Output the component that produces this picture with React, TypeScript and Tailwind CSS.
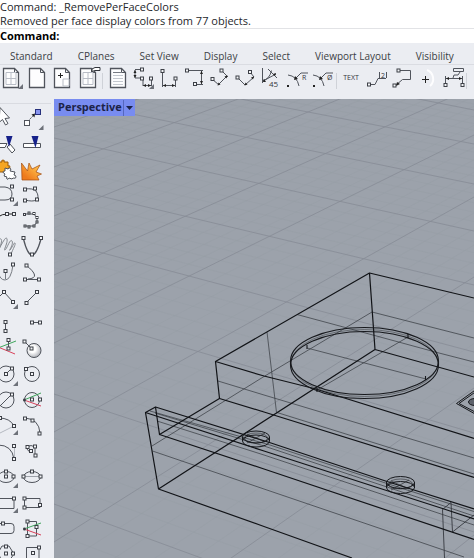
import React from "react";

type Point = [number, number];

const INK = "#50545c";

const tabs = [
  "Standard",
  "CPlanes",
  "Set View",
  "Display",
  "Select",
  "Viewport Layout",
  "Visibility",
];

// small square handles used by nearly every icon
const Nodes = ({ at, size = 3 }: { at: Point[]; size?: number }) => (
  <g fill="#f4f5f8" stroke="#3d4047" strokeWidth="1">
    {at.map(([x, y]) => (
      <rect
        key={`${x}-${y}`}
        x={x - size / 2}
        y={y - size / 2}
        width={size}
        height={size}
      />
    ))}
  </g>
);

// flyout marker in the lower right corner of a tool
const Corner = ({ x, y }: { x: number; y: number }) => (
  <path d={`M${x} ${y}v-5l-5 5z`} fill="#6d7179" stroke="none" />
);

const Page = ({ x, children }: { x: number; children?: React.ReactNode }) => (
  <>
    <path
      d={`M${x} 68.5h11l4 4v15h-15z`}
      fill="#fdfdfe"
      stroke={INK}
      strokeWidth="1.3"
    />
    <path d={`M${x + 11} 68.5v4h4`} fill="none" stroke={INK} />
    {children}
  </>
);

// All drawings below share one sheet, each button shows its own cell of it.
const topTools: { name: string; icon: React.ReactNode }[] = [
  {
    name: "New layout",
    icon: (
      <>
        <Page x={3.5}>
          <path d="M6 72.500h10v12h-10zM11 72.500v12M6 78.500h10" stroke="#b9bdc6" fill="none" />
        </Page>
        <Corner x={23} y={89} />
      </>
    ),
  },
  { name: "Blank page", icon: <Page x={29.5} /> },
  {
    name: "Add detail",
    icon: (
      <Page x={54.5}>
        <path d="M58 75.500h5M60.500 73v5" stroke="#222" fill="none" />
        <path d="M63 79h6v7h-6z" stroke="#b9bdc6" fill="#fff" />
      </Page>
    ),
  },
  {
    name: "Edit layout",
    icon: (
      <Page x={80.5}>
        <path d="M83 72.500h10v12h-10zM88 72.500v12M83 78.500h10" stroke="#b9bdc6" fill="none" />
        <path d="M92 69l3-1.500h5v3h-5l-3 1z" fill="#fff" stroke="#33363c" />
      </Page>
    ),
  },
  {
    name: "Page notes",
    icon: (
      <Page x={110.5}>
        <path d="M113 72.500h8" stroke="#777b84" />
        <path d="M113 75.500h10M113 78.500h10M113 81.500h10M113 84.500h10" stroke="#c3c7ce" />
      </Page>
    ),
  },
  {
    name: "Dimension",
    icon: (
      <>
        <path d="M135 69.500h8M135 78h8v8M151.500 78v8M143 85.500h8M135 70v8" />
        <path d="M133.500 73l1.500-3 1.500 3zM133.500 75l1.500 3 1.500-3zM146 84l-3 1.500 3 1.500zM148 84l3 1.500-3 1.500z" fill="#222" stroke="none" />
        <Nodes at={[[142, 69.5], [142, 78.5], [151, 78.5]]} />
        <Corner x={154} y={89} />
      </>
    ),
  },
  {
    name: "Horizontal dimension",
    icon: (
      <>
        <path d="M162.500 71v16M175.500 79v8M163 85.500h12" />
        <path d="M166 84l-3 1.500 3 1.500zM172 84l3 1.500-3 1.500z" fill="#222" stroke="none" />
        <Nodes at={[[162.5, 71], [175.5, 78.5]]} />
      </>
    ),
  },
  {
    name: "Vertical dimension",
    icon: (
      <>
        <path d="M187 70.500h16M195 84.500h8M201.500 71v13" />
        <path d="M200 74l1.500-3 1.500 3zM200 81l1.500 3 1.500-3z" fill="#222" stroke="none" />
        <Nodes at={[[187, 70.5], [195, 84]]} />
      </>
    ),
  },
  {
    name: "Aligned dimension",
    icon: (
      <>
        <path d="M212 79l7 6M221 70l7 7M218 85l9-9" />
        <path d="M217.500 85.500l1-3 2 2zM227.500 75.500l-1 3-2-2z" fill="#222" stroke="none" />
        <Nodes at={[[212.5, 79], [221.5, 70.5]]} />
      </>
    ),
  },
  {
    name: "Rotated dimension",
    icon: (
      <>
        <path d="M237 77l8 8M250 72l4 5M245 85l9-8" />
        <path d="M244.500 85.500l1-3 2 2zM254 76.500l-1 3-2-2z" fill="#222" stroke="none" />
        <Nodes at={[[237.5, 77.5], [250, 72]]} />
      </>
    ),
  },
  {
    name: "Angle dimension",
    icon: (
      <>
        <path d="M262.500 68v15M263 81l13-7M268 69l9 9M262.500 80.500q7-1 9-10" />
        <path d="M263 82l1-3 2 3zM276 73l-1 3-2-2z" fill="#222" stroke="none" />
        <text x="269" y="87" fontSize="8" fill="#33363c" stroke="none">45</text>
      </>
    ),
  },
  {
    name: "Radius dimension",
    icon: (
      <>
        <path d="M288 75q9 1 11 11M295 79l6-6h7" />
        <path d="M294 80l1-4 3 3zM287 85h2v2h-2z" fill="#222" stroke="none" />
        <text x="302" y="80" fontSize="7" fill="#33363c" stroke="none">R</text>
      </>
    ),
  },
  {
    name: "Diameter dimension",
    icon: (
      <>
        <path d="M313 75q9 1 11 11M320 79l6-6h7" />
        <path d="M319 80l1-4 3 3zM313 85h2v2h-2z" fill="#222" stroke="none" />
        <text x="327" y="80" fontSize="7" fill="#33363c" stroke="none">Ø</text>
      </>
    ),
  },
  {
    name: "Text",
    icon: (
      <text x="351" y="80" fontSize="7" textAnchor="middle" fill="#33363c" stroke="none">
        TEXT
      </text>
    ),
  },
  {
    name: "Leader",
    icon: (
      <>
        <path d="M369 84.500h6l3-6h8M379.500 72v6M386.500 72v6" />
        <text x="381" y="78" fontSize="7" fill="#33363c" stroke="none">2</text>
        <Nodes at={[[369, 84.5]]} />
      </>
    ),
  },
  {
    name: "Curve leader",
    icon: (
      <>
        <path d="M398 70.500h12.500v9h-8l-7 6" />
        <path d="M396 86l1-4 3 2z" fill="#222" stroke="none" />
        <Nodes at={[[398.5, 70.5], [394.5, 85.5]]} />
      </>
    ),
  },
  {
    name: "Center mark",
    icon: (
      <>
        <path d="M427 70a9.500 9.500 0 0 1 3 16" stroke="#fdfdfe" strokeWidth="2" />
        <path d="M422 79.500h7M425.500 76v7" stroke="#222" />
      </>
    ),
  },
  {
    name: "Dimension style",
    icon: (
      <>
        <path d="M453.500 68.500h10v3h-10zM460 72l-2 3h-4l-1 3M445.500 76v9M462.500 76v9M446 78.500h16" />
        <path d="M449 77l-3 1.500 3 1.500zM459 77l3 1.500-3 1.500z" fill="#222" stroke="none" />
        <Nodes at={[[445.5, 85], [462.5, 85]]} />
      </>
    ),
  },
];

const groupEnds = ["Edit layout", "Diameter dimension", "Dimension style"];

const sideTools: { name: string; icon: React.ReactNode }[] = [
  {
    name: "Select",
    icon: <path d="M0 107.500l9.500 10.500-4.500.5 3 5-2.500 1.500-3-5.500-3.500 3z" fill="#fff" />,
  },
  {
    name: "Move",
    icon: (
      <>
        <path d="M28 121l6-6" strokeDasharray="2 1" />
        <path d="M35 113.500l-.5 4-3-3z" fill="#222" stroke="none" />
        <rect x="35.500" y="109.500" width="5" height="5" fill="#8793ee" stroke="#26307c" />
        <rect x="24.500" y="120.500" width="5" height="5" fill="#fff" />
        <Corner x={43.5} y={130} />
      </>
    ),
  },
  {
    name: "Trim",
    icon: (
      <>
        <path d="M-4 143.500h11l-2 4h-9z" fill="#fff" />
        <path d="M7 147l3-3 5 6-3 3z" fill="#fff" />
        <path d="M6 136h6.500l-3.500 11z" fill="#16218a" stroke="none" />
      </>
    ),
  },
  {
    name: "Split",
    icon: (
      <>
        <path d="M23.500 143.500h17v4h-17z" fill="#fff" />
        <path d="M31.500 136h7l-3 12z" fill="#16218a" stroke="none" />
      </>
    ),
  },
  {
    name: "Join",
    icon: (
      <>
        <path d="M-3 162h5q-1-2 1-2t1 2h4v4q2-1 2 1t-2 1v4h-11z" fill="#f5a623" stroke="#9a5b0a" />
        <path d="M5 168l3 1q1-2 3 0l-1 2 5 1-1 3q2 0 2 2t-3 1l-1 1-3-1q-1 2-2 1t0-2l-3-1 1-2q-2-1-2-2t2-1z" fill="#fff" />
      </>
    ),
  },
  {
    name: "Explode",
    icon: (
      <>
        <defs>
          <linearGradient id="flame" x1="1" y1="0" x2="0" y2="1">
            <stop offset="0.2" stopColor="#ffc04a" />
            <stop offset="0.8" stopColor="#ee7a1c" />
          </linearGradient>
        </defs>
        <path d="M21.500 163l6 8 1.500-8 3 6 8-4-4 7 5.500 2-4.500 2 2 4h-17z" fill="url(#flame)" stroke="#a04a10" strokeWidth="0.7" />
      </>
    ),
  },
  {
    name: "Interpolated curve",
    icon: (
      <>
        <path d="M-4 187h9q7 1 7 7t-7 6h-9" />
        <Nodes at={[[12, 186.5], [12, 199.5]]} />
        <Corner x={18} y={206} />
      </>
    ),
  },
  {
    name: "Control point curve",
    icon: (
      <>
        <path d="M25 189q8-1 11 2 4 6 0 9-3 2-11 0" />
        <Nodes at={[[25, 189.5], [25, 200.5], [35, 188.5], [37, 199.5]]} />
      </>
    ),
  },
  {
    name: "Blend curve",
    icon: (
      <>
        <path d="M-2 217q4-3 9-3h7" stroke="#222" />
        <Nodes at={[[7, 214], [14, 214]]} />
      </>
    ),
  },
  {
    name: "Edit points",
    icon: (
      <>
        <path d="M24 214h10l3 4v4l-3 4-9 0" />
        <Nodes at={[[24.5, 214.5], [29, 213], [34, 213.5], [37, 217.5], [37, 222], [34, 226], [29, 227], [25, 226]]} size={2} />
      </>
    ),
  },
  {
    name: "Spiral",
    icon: (
      <>
        <path d="M-3 245c2-8 6-8 4-1s-3 6-1 3 6-12 7-8-4 12-2 11 5-12 7-9-4 11-2 9 4-8 5-7-2 6-4 11" stroke="#85898f" />
        <Nodes at={[[10, 254.5]]} />
      </>
    ),
  },
  {
    name: "Parabola",
    icon: (
      <>
        <path d="M23.500 239q4 16 8.500 16t9-16" strokeWidth="1.3" />
        <Nodes at={[[23.5, 238], [41, 238], [32, 254.5]]} />
      </>
    ),
  },
  {
    name: "Hyperbola",
    icon: (
      <>
        <path d="M-2 272q2 8 7 8 6 0 8-15M5.500 271v8" stroke="#777b82" />
        <Nodes at={[[5.5, 271], [13, 264.5]]} />
      </>
    ),
  },
  {
    name: "Conic",
    icon: (
      <>
        <path d="M26 265q16 13 2 14M25 279.500h14" />
        <Nodes at={[[26.5, 265.5], [25, 279.5], [39, 279.5]]} />
      </>
    ),
  },
  {
    name: "Polyline",
    icon: (
      <>
        <path d="M-3 299l7-7 9 10" />
        <Nodes at={[[4, 292], [13, 302]]} />
        <Corner x={18} y={309} />
      </>
    ),
  },
  {
    name: "Line",
    icon: (
      <>
        <path d="M26 303l11-11" />
        <Nodes at={[[37, 292], [26.5, 303]]} />
      </>
    ),
  },
  {
    name: "Vertical segment",
    icon: (
      <>
        <path d="M5.500 322v9" />
        <Nodes at={[[5.5, 322], [5.5, 331]]} />
      </>
    ),
  },
  {
    name: "Horizontal segment",
    icon: (
      <>
        <path d="M32 322.500h8" />
        <Nodes at={[[32, 322.5], [40, 322.5]]} />
      </>
    ),
  },
  {
    name: "Line normal",
    icon: (
      <>
        <path d="M-2 348l18-7" stroke="#3fa55c" />
        <path d="M-2 347l17 7" stroke="#d8415a" />
        <path d="M8.500 340v8" />
        <Nodes at={[[8.5, 340], [8.5, 348.5]]} />
      </>
    ),
  },
  {
    name: "Line from surface",
    icon: (
      <>
        <defs>
          <radialGradient id="ball" cx="0.4" cy="0.4" r="0.6">
            <stop offset="0.4" stopColor="#fff" />
            <stop offset="1" stopColor="#b4b6bc" />
          </radialGradient>
        </defs>
        <circle cx="34" cy="350.500" r="7" fill="url(#ball)" />
        <path d="M24.500 341.500l7 7" />
        <Nodes at={[[24.5, 341.5], [31.5, 348.5]]} />
      </>
    ),
  },
  {
    name: "Circle",
    icon: (
      <>
        <circle cx="6" cy="374" r="8" />
        <path d="M6 374l6-6" />
        <Nodes at={[[6, 374], [12, 368.5]]} />
        <Corner x={18} y={386} />
      </>
    ),
  },
  {
    name: "Circle from center",
    icon: (
      <>
        <circle cx="32" cy="374" r="7.500" />
        <Nodes at={[[32, 374], [26, 369]]} />
      </>
    ),
  },
  {
    name: "Circle by diameter",
    icon: (
      <>
        <circle cx="6" cy="400" r="8" />
        <path d="M12 394l-12 12" />
        <Nodes at={[[12, 394.5]]} />
      </>
    ),
  },
  {
    name: "Circle vertical",
    icon: (
      <>
        <circle cx="32" cy="400" r="7.500" />
        <path d="M24 400l17-7" stroke="#3fa55c" />
        <path d="M24 400l17 6" stroke="#d8415a" />
        <Nodes at={[[32, 399.5], [40, 399.5]]} />
        <path d="M23.500 399h2v2h-2z" fill="#222" />
      </>
    ),
  },
  {
    name: "Arc",
    icon: (
      <>
        <path d="M-1 418q11 0 15 8" />
        <path d="M0 433l14-7" stroke="#b4b8c0" />
        <Nodes at={[[0, 418], [14, 426]]} />
        <Corner x={18} y={435} />
      </>
    ),
  },
  {
    name: "Arc by points",
    icon: (
      <>
        <path d="M25 418q14 1 15 15" />
        <Nodes at={[[25, 418.5], [32.5, 420.5], [39.5, 433.5]]} />
      </>
    ),
  },
  {
    name: "Arc by direction",
    icon: (
      <>
        <path d="M-2 445q14 0 16 14" />
        <path d="M14.500 446v13" stroke="#b4b8c0" />
        <Nodes at={[[14, 446], [14, 459]]} />
      </>
    ),
  },
  {
    name: "Polyarc",
    icon: (
      <>
        <path d="M27 447q4-3 8 0v8M27 447q0 5 4 4" />
        <Nodes at={[[27.5, 447], [35, 446.5], [31, 451], [35.5, 455.5]]} />
      </>
    ),
  },
  {
    name: "Ellipse",
    icon: (
      <>
        <ellipse cx="6" cy="477" rx="8" ry="5.500" />
        <Nodes at={[[6, 471.5], [13.5, 476.5], [6, 476.5]]} />
        <Corner x={18} y={488} />
      </>
    ),
  },
  {
    name: "Ellipse by diameter",
    icon: (
      <>
        <ellipse cx="32" cy="477" rx="8.500" ry="5.500" />
        <path d="M24 476.500h16" stroke="#9da1a9" />
        <Nodes at={[[23.5, 476.5], [40.5, 476.5], [32, 471.5]]} />
      </>
    ),
  },
  {
    name: "Rectangle",
    icon: (
      <>
        <path d="M-4 498.500h18v10h-18z" />
        <Nodes at={[[14, 498.5]]} />
        <Corner x={18} y={513} />
      </>
    ),
  },
  {
    name: "Rectangle by corners",
    icon: (
      <>
        <path d="M24.500 498.500h15.500v9h-15.500z" />
        <Nodes at={[[24.5, 498.5], [24.5, 507.5], [40, 505]]} />
      </>
    ),
  },
  {
    name: "Rounded rectangle",
    icon: (
      <>
        <rect x="-6" y="523.500" width="20" height="10" rx="3" />
        <Nodes at={[[3, 523.5]]} />
      </>
    ),
  },
  {
    name: "Rectangle vertical",
    icon: (
      <>
        <path d="M27.500 521.500h9v14.500h-9z" />
        <path d="M24 529l17-6" stroke="#3fa55c" />
        <path d="M24 529l17 6" stroke="#d8415a" />
        <Nodes at={[[27.5, 521.5], [36.5, 527], [27.5, 536]]} />
        <path d="M23.500 528h2v2h-2z" fill="#222" />
      </>
    ),
  },
  {
    name: "Polygon",
    icon: (
      <>
        <path d="M-2 553l4-7h7l5 8-5 7h-7z" />
        <Nodes at={[[6, 546.5], [13, 553.5], [6, 553.5]]} />
      </>
    ),
  },
  {
    name: "Square",
    icon: (
      <>
        <path d="M26.500 547.500h12.500v13h-12.500z" />
        <Nodes at={[[39, 547.5], [33, 553]]} />
      </>
    ),
  },
];

// Construction plane lines: height at the left and right edge of the view.
const gridDown: Point[] = [
  [-8, 80], [27, 110], [63, 144], [98, 184], [138, 231], [185, 285],
  [240, 352], [309, 433], [394, 532], [504, 658], [650, 830],
];
const gridUp: Point[] = [
  [90, -36], [127, -13], [167, 12], [216, 44], [275, 87], [343, 135],
  [432, 197], [542, 277], [682, 388], [870, 535],
];

const lines = (set: Point[]) =>
  set.map(([a, b]) => `M54 ${a}L474 ${b}`).join("");

const between = (set: Point[]) =>
  set
    .slice(1)
    .flatMap(([a, b], i) =>
      [0.2, 0.4, 0.6, 0.8].map((t) => {
        const [pa, pb] = set[i];
        return `M54 ${pa + (a - pa) * t}L474 ${pb + (b - pb) * t}`;
      })
    )
    .join("");

const Scene = () => (
  <svg
    className="block h-full w-full"
    viewBox="54 99 420 459"
    preserveAspectRatio="xMinYMin slice"
    fill="none"
    role="img"
    aria-label="Wireframe model"
  >
    <path
      d={between(gridDown) + between(gridUp)}
      stroke="#969ca5"
      strokeWidth="0.4"
    />
    <path d={lines(gridDown) + lines(gridUp)} stroke="#878c96" strokeWidth="0.8" />

    {/* isocurves */}
    <g stroke="#34383e" strokeWidth="0.7">
      <path d="M152 446L264 376.500 372 312 474 338" />
      <path d="M218 381L264 395 474 458" />
      <path d="M297 314.500L336 325 439 353 474 362" />
      <path d="M267 332L276.500 412.500" />
      <path d="M277 412.500L474 474" />
      <path d="M152.500 451L264 489 464 557" />
      <path d="M150 411L270 445 387 483.500 474 511.500" />
      <path d="M155 413L264 446 474 516" />
      <path d="M157 421L264 455 474 525" />
      <path d="M307 348L426 379M408 337L317 390" />
      <path d="M442.500 509.500L444.500 558M442.500 509.500L451 502.500 452.500 532 474 515" strokeWidth="0.9" />
    </g>

    {/* solid edges */}
    <g stroke="#111317" strokeWidth="1.200" strokeLinejoin="round">
      <path d="M474 298L369.500 273 215.500 361.500 219.500 398.500 159.500 434.500 155.500 407 145.500 412.500 158.500 489" />
      <path d="M369.500 273L375 349.500 474 377M375 349.500L158.500 489 264 526.500 352 558" />
      <path d="M215.500 361.500L264 376 314 388.500 474 438.500" />
      <path d="M219.500 398.500L264 412 474 477.500" />
      <path d="M155.500 407L271 443 387 481.500 474 509" />
      <path d="M145.500 412.500L264 451 444 509 474 519" />
      <path d="M159.500 434.500L264 469 474 539.500" />
    </g>

    {/* large opening */}
    <g stroke="#17191d" strokeWidth="1.100">
      <ellipse cx="364.500" cy="361" rx="74" ry="33.500" />
      <ellipse cx="364.500" cy="365" rx="74" ry="33.500" />
      <ellipse cx="364.500" cy="363" rx="73.500" ry="33.500" strokeWidth="0.4" />
      <path d="M290.500 361v4M438.500 361v4M425.500 376v4M408 334v4M307 345v4M317 388v4" />
    </g>

    {/* screw holes */}
    <g stroke="#17191d" strokeWidth="1">
      <ellipse cx="256" cy="437" rx="13.500" ry="6" />
      <ellipse cx="256" cy="441" rx="13.500" ry="6" />
      <ellipse cx="256" cy="438" rx="11.500" ry="5" strokeWidth="0.5" />
      <path d="M242.500 437v4M269.500 437v4" />
      <path d="M247 443l18-10M247 434l18 8" strokeWidth="0.6" />
      <ellipse cx="400.500" cy="482.500" rx="14" ry="6" />
      <ellipse cx="400.500" cy="487.500" rx="14" ry="6" />
      <ellipse cx="400.500" cy="484" rx="12" ry="5" strokeWidth="0.5" />
      <path d="M386.500 482v6M414.500 482v6" />
      <path d="M391 490l18-10M391 481l18 8" strokeWidth="0.6" />
    </g>

    {/* latch */}
    <g stroke="#15171b">
      <path d="M476 389.500L456.500 403.500 476 414.500M476 391.500L459 403.500 476 412.500" />
      <ellipse cx="475" cy="402" rx="6.500" ry="3.500" fill="#5d626b" />
    </g>
  </svg>
);

const CommandArea = () => (
  <section className="bg-white text-[11px] leading-[14px] text-[#25272b]">
    <p className="whitespace-nowrap">Command: _RemovePerFaceColors</p>
    <p className="whitespace-nowrap">
      Removed per face display colors from 77 objects.
    </p>
    <div className="flex h-[15px] items-center border-t border-[#e2e3e6]">
      <label htmlFor="command" className="font-bold text-black">
        Command:
      </label>
      <input id="command" className="h-3 min-w-0 flex-1 bg-transparent pl-1 outline-none" />
    </div>
  </section>
);

const App = () => {
  return (
    <div className="flex h-screen flex-col overflow-hidden bg-[#ebedf2] font-['Open_Sans','Noto_Sans',sans-serif]">
      <CommandArea />

      <nav className="flex h-[22px] shrink-0 items-center gap-[25px] overflow-hidden border-b border-[#dadce2] pt-1 pl-[10px] text-[10px] leading-4 text-[#3c3f45]">
        {tabs.map((tab) => (
          <button key={tab} type="button" className="shrink-0 whitespace-nowrap">
            {tab}
          </button>
        ))}
      </nav>

      <div className="-ml-px flex h-[34px] shrink-0 overflow-hidden">
        {topTools.map(({ name, icon }, i) => (
          <button key={name} type="button" aria-label={name} className="relative w-[26px] shrink-0">
            <svg
              className="block h-[34px] w-[26px] overflow-visible"
              viewBox={`${i * 26 - 1} 65 26 34`}
              fill="none"
              stroke={INK}
            >
              {icon}
            </svg>
            {groupEnds.includes(name) && (
              <span className="absolute top-2 right-0 h-4 w-px bg-[#cfd2d8]" />
            )}
          </button>
        ))}
      </div>

      <div className="flex min-h-0 flex-1">
        <aside className="w-[54px] shrink-0 overflow-hidden pt-1">
          <div className="-ml-[7px] grid w-[58px] grid-cols-[26px_26px] border-t border-[#d9dbe1]">
            {sideTools.map(({ name, icon }, i) => (
              <button key={name} type="button" aria-label={name}>
                <svg
                  className="block h-[26px] w-[26px] overflow-visible"
                  viewBox={`${(i % 2) * 26 - 7} ${Math.floor(i / 2) * 26 + 104} 26 26`}
                  fill="none"
                  stroke={INK}
                >
                  {icon}
                </svg>
              </button>
            ))}
          </div>
        </aside>

        <main className="relative min-w-0 flex-1 overflow-hidden bg-[#9ca2ab]">
          <Scene />
          <button
            type="button"
            className="absolute top-0 left-0 flex h-[17px] items-center bg-[#788cf0] pl-1 text-[11px] font-bold text-[#1c2348]"
          >
            Perspective
            <span className="ml-px flex h-4 w-3 items-center justify-center border-l border-[#5567bd]">
              <svg className="h-1 w-[7px]" viewBox="0 0 7 4">
                <path d="M0 0h7l-3.500 4z" fill="#1c2348" />
              </svg>
            </span>
          </button>
        </main>
      </div>
    </div>
  );
};

export default App;
